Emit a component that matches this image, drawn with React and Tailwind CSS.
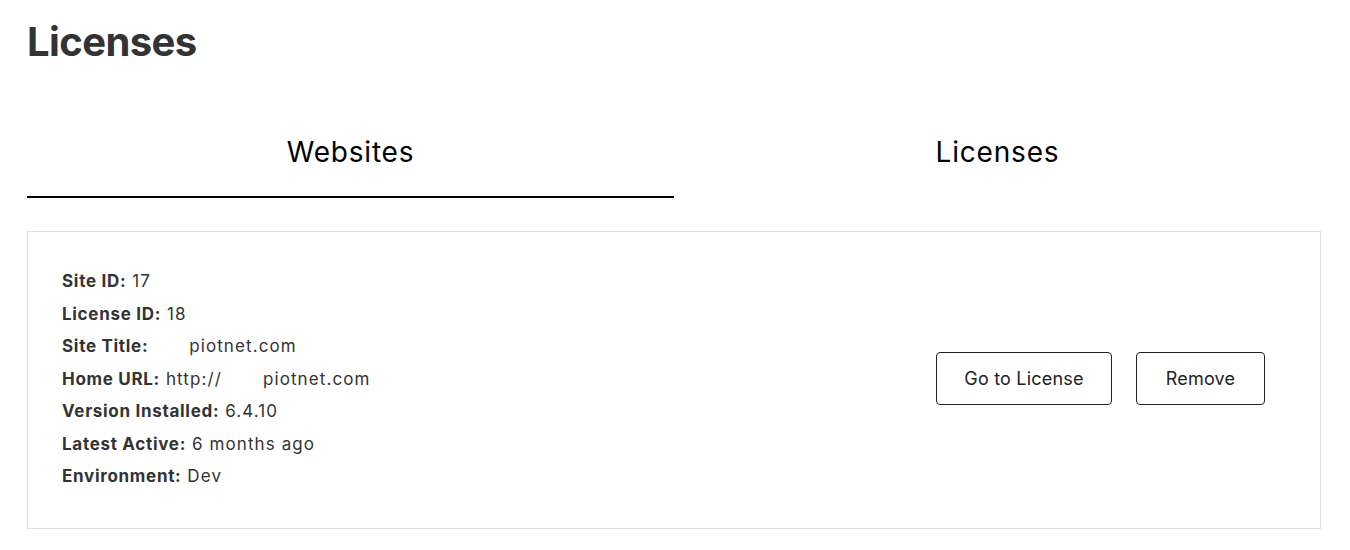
export default function App() {
  const rows = [
    { label: 'Site ID:', value: '17' },
    { label: 'License ID:', value: '18' },
    { label: 'Site Title:', value: <span className="ml-[35px]">piotnet.com</span> },
    { label: 'Home URL:', value: <>http://<span className="ml-[41px]">piotnet.com</span></> },
    { label: 'Version Installed:', value: '6.4.10' },
    { label: 'Latest Active:', value: '6 months ago' },
    { label: 'Environment:', value: 'Dev' },
  ]

  return (
    <div className="min-h-screen bg-white px-[27px] pt-[16px] text-[#333] [font-family:Inter,'Noto_Sans',sans-serif]">
      <h1 className="text-[40px] font-bold leading-[52px] tracking-[-0.6px] text-[#333]">Licenses</h1>

      {/* Tabs */}
      <div className="mt-[32px] flex w-[1294px]">
        <button className="flex-1 h-[98px] border-b-2 border-black pt-[8px] text-[28px] tracking-[0.8px] text-black">Websites</button>
        <button className="flex-1 h-[98px] border-b-2 border-transparent pt-[8px] text-[28px] tracking-[0.8px] text-black">Licenses</button>
      </div>

      {/* Card */}
      <div className="mt-[33px] flex w-[1294px] items-center border border-[#dcdcdc] pl-[34px] pr-[55px] pt-[33px] pb-[35px]">
        <div className="flex-1">
          {rows.map(r => (
            <p key={r.label} className="text-[17px] leading-[32.5px] tracking-[1.1px] text-[#333]">
              <span className="font-bold tracking-[0.7px]">{r.label}</span> {r.value}
            </p>
          ))}
        </div>
        <div className="flex gap-[24px]">
          <button className="h-[53px] w-[176px] rounded-[4px] border border-[#222] text-[18px] tracking-[0.2px] text-[#222]">Go to License</button>
          <button className="h-[53px] w-[129px] rounded-[4px] border border-[#222] text-[18px] tracking-[0.2px] text-[#222]">Remove</button>
        </div>
      </div>
    </div>
  )
}
